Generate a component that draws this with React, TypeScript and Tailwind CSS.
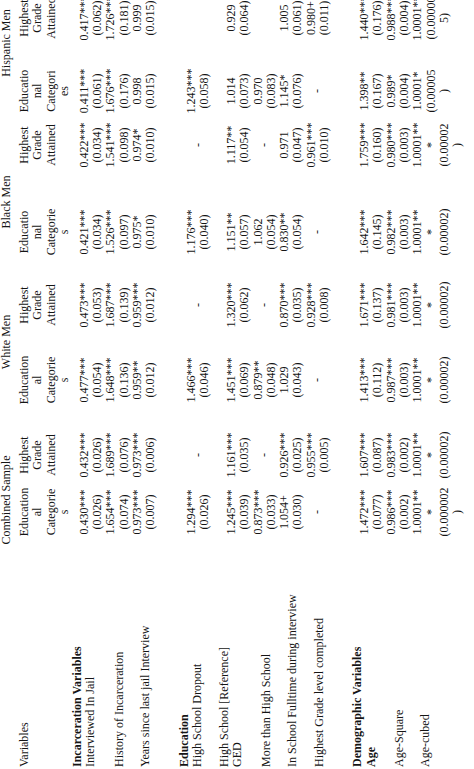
import React from 'react'

// scanned regression table, page is rotated 90deg counter-clockwise in the shot
const COLS = 'grid grid-cols-[228px_58px_56px_94px_56px_90px_84px_24px_122px]'

type Label = { text: string; bold?: boolean }
type Row = {
  kind: 'section' | 'plain' | 'tall'
  label: Label[]
  cells: string[][]
}

const groups = [
  { name: 'Combined Sample', cls: 'pr-[32px]' },
  { name: 'White Men', cls: 'pl-[20px]' },
  { name: 'Black Men', cls: 'pr-[24px]' },
  { name: 'Hispanic Men', cls: 'pr-[26px]' },
]

const headers: string[][] = [
  ['Education', 'al', 'Categorie', 's'],
  ['Highest', 'Grade', 'Attained'],
  ['Education', 'al', 'Categorie', 's'],
  ['Highest', 'Grade', 'Attained'],
  ['Educatio', 'nal', 'Categorie', 's'],
  ['Highest', 'Grade', 'Attained'],
  ['Educatio', 'nal', 'Categori', 'es'],
  ['Highest', 'Grade', 'Attained'],
]

const block1: Row[] = [
  {
    kind: 'section',
    label: [{ text: 'Incarceration Variables', bold: true }, { text: 'Interviewed In Jail' }],
    cells: [
      ['0.430***', '(0.026)'], ['0.432***', '(0.026)'], ['0.477***', '(0.054)'], ['0.473***', '(0.053)'],
      ['0.421***', '(0.034)'], ['0.422***', '(0.034)'], ['0.411***', '(0.061)'], ['0.417***', '(0.062)'],
    ],
  },
  {
    kind: 'plain',
    label: [{ text: 'History of Incarceration' }],
    cells: [
      ['1.654***', '(0.074)'], ['1.689***', '(0.076)'], ['1.648***', '(0.136)'], ['1.687***', '(0.139)'],
      ['1.526***', '(0.097)'], ['1.541***', '(0.098)'], ['1.676***', '(0.176)'], ['1.726***', '(0.181)'],
    ],
  },
  {
    kind: 'plain',
    label: [{ text: 'Years since last jail Interview' }],
    cells: [
      ['0.973***', '(0.007)'], ['0.973***', '(0.006)'], ['0.959**', '(0.012)'], ['0.959***', '(0.012)'],
      ['0.975*', '(0.010)'], ['0.974*', '(0.010)'], ['0.998', '(0.015)'], ['0.999', '(0.015)'],
    ],
  },
]

const block2a: Row[] = [
  {
    kind: 'section',
    label: [{ text: 'Education', bold: true }, { text: 'High School Dropout' }],
    cells: [
      ['1.294***', '(0.026)'], ['-'], ['1.466***', '(0.046)'], ['-'],
      ['1.176***', '(0.040)'], ['-'], ['1.243***', '(0.058)'], [],
    ],
  },
]

const block2b: Row[] = [
  {
    kind: 'section',
    label: [{ text: 'High School [Reference]' }, { text: 'GED' }],
    cells: [
      ['1.245***', '(0.039)'], ['1.161***', '(0.035)'], ['1.451***', '(0.069)'], ['1.320***', '(0.062)'],
      ['1.151**', '(0.057)'], ['1.117**', '(0.054)'], ['1.014', '(0.073)'], ['0.929', '(0.064)'],
    ],
  },
  {
    kind: 'plain',
    label: [{ text: 'More than High School' }],
    cells: [
      ['0.873***', '(0.033)'], ['-'], ['0.879**', '(0.048)'], ['-'],
      ['1.062', '(0.054)'], ['-'], ['0.970', '(0.083)'], [],
    ],
  },
  {
    kind: 'plain',
    label: [{ text: 'In School Fulltime during interview' }],
    cells: [
      ['1.054+', '(0.030)'], ['0.926***', '(0.025)'], ['1.029', '(0.043)'], ['0.870***', '(0.035)'],
      ['0.830**', '(0.054)'], ['0.971', '(0.047)'], ['1.145*', '(0.076)'], ['1.005', '(0.061)'],
    ],
  },
  {
    kind: 'plain',
    label: [{ text: 'Highest Grade level completed' }],
    cells: [
      ['-'], ['0.955***', '(0.005)'], ['-'], ['0.928***', '(0.008)'],
      ['-'], ['0.961***', '(0.010)'], ['-'], ['0.980+', '(0.011)'],
    ],
  },
]

const block3: Row[] = [
  {
    kind: 'section',
    label: [{ text: 'Demographic Variables', bold: true }, { text: 'Age', bold: true }],
    cells: [
      ['1.472***', '(0.077)'], ['1.607***', '(0.087)'], ['1.413***', '(0.112)'], ['1.671***', '(0.137)'],
      ['1.642***', '(0.145)'], ['1.759***', '(0.160)'], ['1.398**', '(0.167)'], ['1.440***', '(0.176)'],
    ],
  },
  {
    kind: 'plain',
    label: [{ text: 'Age-Square' }],
    cells: [
      ['0.986***', '(0.002)'], ['0.983***', '(0.002)'], ['0.987***', '(0.003)'], ['0.981***', '(0.003)'],
      ['0.982***', '(0.003)'], ['0.980***', '(0.003)'], ['0.989*', '(0.004)'], ['0.988***', '(0.004)'],
    ],
  },
  {
    kind: 'tall',
    label: [{ text: 'Age-cubed' }],
    cells: [
      ['1.0001**', '*', '(0.000002', ')'],
      ['1.0001**', '*', '(0.00002)'],
      ['1.0001**', '*', '(0.00002)'],
      ['1.0001**', '*', '(0.00002)'],
      ['1.0001**', '*', '(0.00002)'],
      ['1.0001**', '*', '(0.00002', ')'],
      ['1.0001*', '(0.00005', ')'],
      ['1.0001**', '(0.00000', '5)'],
    ],
  },
]

const Line = ({ children, bold }: { children: React.ReactNode; bold?: boolean }) => (
  <div className={`h-[13.3px] leading-[13.3px] whitespace-nowrap ${bold ? 'font-bold' : ''}`}>{children}</div>
)

const TableRow = ({ row }: { row: Row }) => {
  if (row.kind === 'section') {
    return (
      <div className={`${COLS} h-[33.4px]`}>
        <div className="pl-[2px]">
          {row.label.map((l, i) => (
            <Line key={i} bold={l.bold}>{l.text}</Line>
          ))}
        </div>
        {row.cells.map((c, i) => (
          <div key={i} className="flex flex-col items-center justify-center pt-[6.8px]">
            {c.map((v, j) => <Line key={j}>{v}</Line>)}
          </div>
        ))}
      </div>
    )
  }

  if (row.kind === 'tall') {
    return (
      <div className={`${COLS} h-[53.2px]`}>
        <div className="flex h-[26.6px] items-center pl-[2px] pt-[3px]">
          <Line>{row.label[0].text}</Line>
        </div>
        {row.cells.map((c, i) => (
          <div key={i} className="flex flex-col items-center justify-start">
            {c.map((v, j) => <Line key={j}>{v}</Line>)}
          </div>
        ))}
      </div>
    )
  }

  return (
    <div className={`${COLS} h-[26.6px]`}>
      <div className="flex items-center pl-[2px] pt-[3px]">
        <Line>{row.label[0].text}</Line>
      </div>
      {row.cells.map((c, i) => (
        <div key={i} className="flex flex-col items-center justify-center">
          {c.map((v, j) => <Line key={j}>{v}</Line>)}
        </div>
      ))}
    </div>
  )
}

export default function App() {
  return (
    <div className="h-[769px] w-[474px] overflow-hidden bg-white">
      <div className="h-[474px] w-[769px] origin-top-left -rotate-90 translate-y-[769px] font-['Liberation_Serif',serif] text-[12px] text-[#151515]">
        {/* group header */}
        <div className={`${COLS} h-[18px]`}>
          <div />
          {groups.map((g) => (
            <div key={g.name} className={`col-span-2 flex justify-center ${g.cls}`}>
              <Line>{g.name}</Line>
            </div>
          ))}
        </div>

        {/* column header */}
        <div className={`${COLS} h-[53px]`}>
          <div className="pl-[2px]">
            <Line>Variables</Line>
          </div>
          {headers.map((h, i) => (
            <div key={i} className="flex flex-col items-center">
              {h.map((t, j) => <Line key={j}>{t}</Line>)}
            </div>
          ))}
        </div>

        {block1.map((r, i) => <TableRow key={i} row={r} />)}
        <div className="h-[20.6px]" />
        {block2a.map((r, i) => <TableRow key={i} row={r} />)}
        <div className="h-[6.6px]" />
        {block2b.map((r, i) => <TableRow key={i} row={r} />)}
        <div className="h-[20px]" />
        {block3.map((r, i) => <TableRow key={i} row={r} />)}
      </div>
    </div>
  )
}
